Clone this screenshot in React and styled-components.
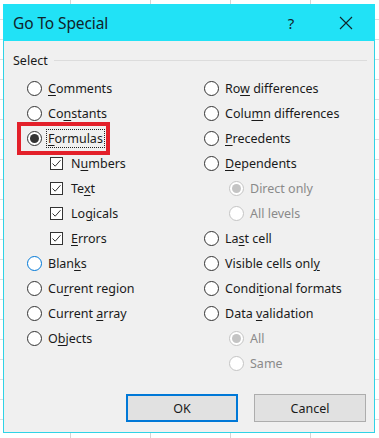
import React from 'react';
import styled, {createGlobalStyle} from 'styled-components';

const GlobalStyle = createGlobalStyle`
    html, body {
        margin: 0;
        padding: 0;
    }
    body {
        width: 379px;
        height: 438px;
        overflow: hidden;
        font-family: 'Noto Sans', 'Open Sans', sans-serif;
        background-color: #ffffff;
        background-image:
            repeating-linear-gradient(to right, transparent 0 70px, #d4d4d4 70px 71px, transparent 71px 80px),
            repeating-linear-gradient(to bottom, transparent 0 19px, #dedede 19px 20px);
    }
`

const Sheet = styled.div`
    padding: 4px 0 0 3px;
`

const Dialog = styled.div`
    width: 372px;
    height: 429px;
    box-sizing: border-box;
    border: 1px solid #2fd3e6;
    border-top: none;
    background: #f0f0f0;
    display: flex;
    flex-direction: column;
`

const TitleBar = styled.div`
    height: 37px;
    background: #21e2f6;
    display: flex;
    align-items: center;
    padding-left: 10px;
    color: #10242a;
    margin: 0 -1px;
`

const Title = styled.div`
    flex: 1;
    font-size: 15.5px;
    letter-spacing: -0.1px;
`

const TitleButton = styled.div`
    width: ${props => props.w}px;
    margin-right: ${props => props.mr || 0}px;
    display: flex;
    justify-content: center;
    align-items: center;
    font-size: 15px;
    color: #10242a;
`

const Body = styled.div`
    flex: 1;
    padding: 9px 7px 0 9px;
    display: flex;
    flex-direction: column;
`

const GroupHeader = styled.div`
    display: flex;
    align-items: center;
    height: 20px;
    font-size: 12.5px;
    color: #1a1a1a;
    gap: 6px;

    &::after {
        content: '';
        flex: 1;
        height: 1px;
        background: #dcdcdc;
    }
`

const Columns = styled.div`
    display: grid;
    grid-template-columns: 177px 1fr;
    padding: 6px 0 0 14px;
`

const Column = styled.div`
    display: flex;
    flex-direction: column;
`

const Row = styled.div`
    position: relative;
    height: 25px;
    display: flex;
    align-items: center;
    padding-left: ${props => props.indent || 0}px;
    font-size: 12.5px;
    color: ${props => props.disabled ? '#8a8a8a' : '#1a1a1a'};
    white-space: nowrap;
`

const Radio = styled.span`
    box-sizing: border-box;
    width: 15px;
    height: 15px;
    border-radius: 50%;
    border: 1px solid ${props => props.hover ? '#0078d7' : props.disabled ? '#c4c4c4' : '#333333'};
    background: #ffffff;
    margin-right: 6px;
    display: flex;
    justify-content: center;
    align-items: center;
    flex: none;

    &::after {
        content: '';
        display: ${props => props.checked ? 'block' : 'none'};
        width: 9px;
        height: 9px;
        border-radius: 50%;
        background: ${props => props.disabled ? '#c4c4c4' : '#333333'};
    }
`

const Box = styled.span`
    box-sizing: border-box;
    width: 13px;
    height: 13px;
    border: 1px solid #333333;
    background: #ffffff;
    margin-right: 8px;
    display: flex;
    justify-content: center;
    align-items: center;
    flex: none;
`

const Focus = styled.span`
    outline: 1px dotted #222;
    outline-offset: 0;
    padding: 0 1px;
    margin-left: -1px;
`

const Highlight = styled.span`
    position: absolute;
    left: -10px;
    top: -4px;
    width: 93px;
    height: 33px;
    box-sizing: border-box;
    border: 4px solid #e3202a;
    pointer-events: none;
`

const Key = styled.u`
    text-underline-offset: 2px;
`

const Buttons = styled.div`
    display: flex;
    justify-content: flex-end;
    gap: 16px;
    padding: 0 8px 10px 0;
`

const Button = styled.button`
    width: 112px;
    height: 28px;
    box-sizing: border-box;
    font-family: 'Noto Sans', 'Open Sans', sans-serif;
    font-size: 12.5px;
    color: #1a1a1a;
    background: #e1e1e1;
    border: ${props => props.primary ? '2px solid #0078d7' : '1px solid #adadad'};
    padding: 0;
`

const Check = () => (
    <svg width="11" height="11" viewBox="0 0 11 11">
        <path d="M1.5 5.5 L4.2 8.2 L9.5 2.2" fill="none" stroke="#333" strokeWidth="1" />
    </svg>
);

const Label = ({text, k}) => {
    const i = text.indexOf(k);
    if (!k || i < 0) return <span>{text}</span>;
    return <span>{text.slice(0, i)}<Key>{k}</Key>{text.slice(i + 1)}</span>;
};

const left = [
    {type: 'radio', text: 'Comments', k: 'C'},
    {type: 'radio', text: 'Constants', k: 'n'},
    {type: 'radio', text: 'Formulas', k: 'F', checked: true, focus: true},
    {type: 'check', text: 'Numbers', k: 'u'},
    {type: 'check', text: 'Text', k: 'x'},
    {type: 'check', text: 'Logicals', k: 'g'},
    {type: 'check', text: 'Errors', k: 'E'},
    {type: 'radio', text: 'Blanks', k: 'k', hover: true},
    {type: 'radio', text: 'Current region', k: 'r'},
    {type: 'radio', text: 'Current array', k: 'a'},
    {type: 'radio', text: 'Objects', k: 'b'},
];

const right = [
    {type: 'radio', text: 'Row differences', k: 'w'},
    {type: 'radio', text: 'Column differences', k: 'm'},
    {type: 'radio', text: 'Precedents', k: 'P'},
    {type: 'radio', text: 'Dependents', k: 'D'},
    {type: 'radio', text: 'Direct only', sub: true, disabled: true, checked: true},
    {type: 'radio', text: 'All levels', sub: true, disabled: true},
    {type: 'radio', text: 'Last cell', k: 's'},
    {type: 'radio', text: 'Visible cells only', k: 'y'},
    {type: 'radio', text: 'Conditional formats', k: 't'},
    {type: 'radio', text: 'Data validation', k: 'v'},
    {type: 'radio', text: 'All', sub: true, disabled: true, checked: true},
    {type: 'radio', text: 'Same', sub: true, disabled: true},
];

const Option = ({o}) => (
    <Row indent={o.type === 'check' ? 23 : o.sub ? 25 : 0} disabled={o.disabled}>
        {o.type === 'check'
            ? <Box><Check /></Box>
            : <Radio checked={o.checked} disabled={o.disabled} hover={o.hover} />}
        {o.focus ? <Focus><Label text={o.text} k={o.k} /></Focus> : <Label text={o.text} k={o.k} />}
        {o.focus && <Highlight />}
    </Row>
);

const App = () => {
    return (
        <Sheet>
            <GlobalStyle />
            <Dialog>
                <TitleBar>
                    <Title>Go To Special</Title>
                    <TitleButton w={30} mr={11}>?</TitleButton>
                    <TitleButton w={58}>
                        <svg width="14" height="14" viewBox="0 0 14 14">
                            <path d="M1 1 L13 13 M13 1 L1 13" stroke="#10242a" strokeWidth="1.1" />
                        </svg>
                    </TitleButton>
                </TitleBar>
                <Body>
                    <GroupHeader>Select</GroupHeader>
                    <Columns>
                        <Column>{left.map(o => <Option key={o.text} o={o} />)}</Column>
                        <Column>{right.map(o => <Option key={o.text} o={o} />)}</Column>
                    </Columns>
                </Body>
                <Buttons>
                    <Button primary>OK</Button>
                    <Button>Cancel</Button>
                </Buttons>
            </Dialog>
        </Sheet>
    );
}

export default App;
